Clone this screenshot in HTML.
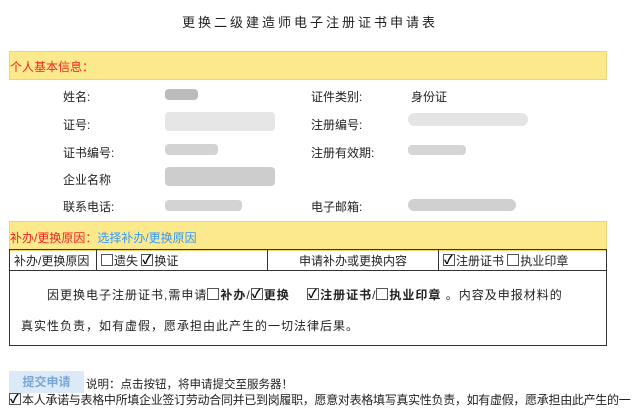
<!DOCTYPE html>
<html><head><meta charset="utf-8"><style>
body{margin:0;width:635px;height:407px;overflow:hidden;background:#fff;font-family:"Liberation Sans","Noto Sans CJK SC",sans-serif;font-size:12px;color:#222;position:relative}
.a{position:absolute;white-space:nowrap}
.bar{position:absolute;left:9px;width:596px;background:#fbe98c;border:1px solid #f3d36a}
.blur{position:absolute;background:#d2d2d2;border-radius:4px;opacity:.8}
.cb{display:inline-block;width:10px;height:10px;border:1px solid #555;vertical-align:-1px;margin-right:1px;position:relative;background:#fff}
.cb.c::after{content:"✓";position:absolute;left:0;top:-4px;font-size:12px;font-weight:bold;color:#000}
table{position:absolute;left:9px;top:249px;width:598px;border-collapse:collapse}
td{border:1px solid #333;font-size:12px;padding:0 4px;height:20px}
</style></head><body>
<div class="a" style="left:182px;top:12px;font-size:13px;letter-spacing:3px">更换二级建造师电子注册证书申请表</div>
<div class="bar" style="top:51px;height:27px"></div>
<div class="a" style="left:10px;top:58px;color:#f22;font-size:12px">个人基本信息：</div>
<div class="a" style="left:63px;top:88px">姓名:</div>
<div class="a" style="left:63px;top:116px">证号:</div>
<div class="a" style="left:63px;top:144px">证书编号:</div>
<div class="a" style="left:63px;top:171px">企业名称</div>
<div class="a" style="left:63px;top:198px">联系电话:</div>
<div class="blur" style="left:165px;top:89px;width:33px;height:11px;background:#aaa"></div>
<div class="blur" style="left:165px;top:112px;width:110px;height:19px;background:#e0e0e0"></div>
<div class="blur" style="left:165px;top:144px;width:53px;height:11px;background:#c8c8c8"></div>
<div class="blur" style="left:165px;top:167px;width:110px;height:19px;background:#c0c0c0"></div>
<div class="blur" style="left:165px;top:200px;width:77px;height:11px;background:#c8c8c8"></div>
<div class="a" style="left:311px;top:88px">证件类别:</div>
<div class="a" style="left:311px;top:116px">注册编号:</div>
<div class="a" style="left:311px;top:144px">注册有效期:</div>
<div class="a" style="left:311px;top:198px">电子邮箱:</div>
<div class="a" style="left:411px;top:88px">身份证</div>
<div class="blur" style="left:408px;top:113px;width:120px;height:13px;background:#ddd;border-radius:7px"></div>
<div class="blur" style="left:408px;top:145px;width:58px;height:10px;background:#ccc"></div>
<div class="blur" style="left:408px;top:199px;width:108px;height:12px;background:#c4c4c4;border-radius:6px"></div>
<div class="bar" style="top:221px;height:28px"></div>
<div class="a" style="left:10px;top:229px;color:#f22">补办/更换原因：<span style="color:#39f">选择补办/更换原因</span></div>
<table>
<tr><td style="width:78px">补办/更换原因</td><td style="width:162px"><span class="cb"></span>遗失 <span class="cb c"></span>换证</td><td style="text-align:center;width:162px">申请补办或更换内容</td><td><span class="cb c"></span>注册证书 <span class="cb"></span>执业印章</td></tr>
<tr><td colspan="4" style="height:74px;vertical-align:top;padding:0">
<div style="margin:15px 0 0 37px;letter-spacing:1px">因更换电子注册证书,需申请<span class="cb"></span><b>补办</b>/<span class="cb c"></span><b>更换</b> &nbsp;&nbsp;&nbsp;<span class="cb c"></span><b>注册证书</b>/<span class="cb"></span><b>执业印章</b> 。内容及申报材料的</div>
<div style="margin:14px 0 0 11px;letter-spacing:1px">真实性负责，如有虚假，愿承担由此产生的一切法律后果。</div>
</td></tr>
</table>
<div class="a" style="left:9px;top:371px;width:75px;height:22px;background:#dce9f6;color:#7aa6d6;font-weight:bold;font-size:12px;text-align:center;line-height:22px">提交申请</div>
<div class="a" style="left:86px;top:376px;font-size:11.5px">说明：点击按钮，将申请提交至服务器！</div>
<div class="a" style="left:9px;top:391px;letter-spacing:-0.3px"><span class="cb c"></span>本人承诺与表格中所填企业签订劳动合同并已到岗履职，愿意对表格填写真实性负责，如有虚假，愿承担由此产生的一</div>
</body></html>
